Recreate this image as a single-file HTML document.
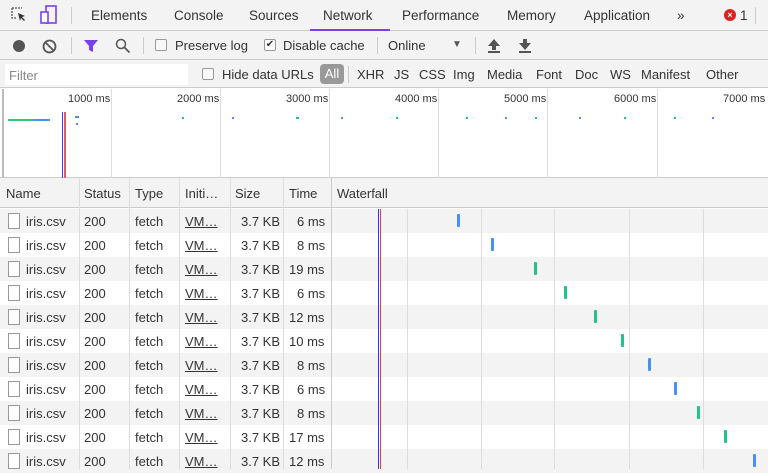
<!DOCTYPE html>
<html><head><style>
*{margin:0;padding:0;box-sizing:border-box}
body{width:768px;height:469px;overflow:hidden;background:#fff;font-family:"Liberation Sans",sans-serif;font-size:13px;color:#333;position:relative}
.abs{position:absolute}
.bar{height:31px;background:#f3f3f3;border-bottom:1px solid #ccc;top:0;left:0;width:768px}
.tab{position:absolute;top:8px;font-size:13.5px;color:#333}
.tb{top:31px;height:29px;width:768px;background:#f3f3f3;border-bottom:1px solid #ccc;left:0}
.fb{top:60px;height:28px;width:768px;background:#f3f3f3;border-bottom:1px solid #ccc;left:0}
.t{position:absolute;white-space:nowrap}
.sep{position:absolute;width:1px;background:#ccc}
.cb{position:absolute;width:12px;height:12px;border:1px solid #999;border-radius:2px;background:#fff}
.row{position:absolute;left:0;width:768px;height:24px}
.row span{position:absolute;top:5px;white-space:nowrap}
.vl{position:absolute;width:1px;background:#ddd}
.wb{position:absolute;width:3px;height:13px;border-radius:1px}
</style></head><body>
<div class="abs bar"></div>
<svg class="abs" style="left:11px;top:7px" width="16" height="16"><path d="M1 1h10M1 1v10h4" stroke="#555" fill="none" stroke-width="1.3" stroke-dasharray="2 1"/><path d="M7 6l7 3-3 1 3 3-1 1-3-3-1 3z" fill="#333"/></svg>
<svg class="abs" style="left:40px;top:5px" width="18" height="20"><rect x="6" y="1" width="10" height="17" fill="none" stroke="#7b3ff0" stroke-width="1.6"/><rect x="1" y="7" width="7" height="11" fill="#fff" stroke="#7b3ff0" stroke-width="1.6"/></svg>
<div class="sep" style="left:71px;top:7px;height:17px"></div>
<div class="tab" style="left:91px">Elements</div>
<div class="tab" style="left:174px">Console</div>
<div class="tab" style="left:249px">Sources</div>
<div class="tab" style="left:323px">Network</div>
<div class="abs" style="left:310px;top:29px;width:80px;height:2px;background:#7b3ff0"></div>
<div class="tab" style="left:402px">Performance</div>
<div class="tab" style="left:507px">Memory</div>
<div class="tab" style="left:584px">Application</div>
<div class="tab" style="left:677px">»</div>
<div class="abs" style="left:724px;top:9px;width:12px;height:12px;border-radius:6px;background:#e0201c;color:#fff;font-size:9px;text-align:center;line-height:12px;font-weight:bold">×</div>
<div class="tab" style="left:740px">1</div>
<div class="sep" style="left:755px;top:7px;height:17px"></div>

<div class="abs tb"></div>
<div class="abs" style="left:13px;top:40px;width:12px;height:12px;border-radius:6px;background:#555"></div>
<svg class="abs" style="left:42px;top:39px" width="15" height="15"><circle cx="7.5" cy="7.5" r="6" fill="none" stroke="#555" stroke-width="1.8"/><path d="M3.5 3.5l8 8" stroke="#555" stroke-width="1.8"/></svg>
<div class="sep" style="left:71px;top:37px;height:17px"></div>
<svg class="abs" style="left:83px;top:39px" width="16" height="14"><path d="M1 1h14l-5 6v6l-4-2v-4z" fill="#7b3ff0"/></svg>
<svg class="abs" style="left:115px;top:38px" width="16" height="16"><circle cx="6" cy="6" r="4.5" fill="none" stroke="#555" stroke-width="1.5"/><path d="M9.5 9.5l5 5" stroke="#555" stroke-width="1.8"/></svg>
<div class="sep" style="left:143px;top:37px;height:17px"></div>
<div class="cb" style="left:155px;top:39px;background:#f8f8f8"></div>
<div class="t" style="left:175px;top:38px">Preserve log</div>
<div class="cb" style="left:264px;top:39px;font-size:10px;line-height:10px;text-align:center">✔</div>
<div class="t" style="left:283px;top:38px">Disable cache</div>
<div class="sep" style="left:377px;top:37px;height:17px"></div>
<div class="t" style="left:388px;top:38px">Online</div>
<div class="t" style="left:452px;top:39px;font-size:10px;color:#555">▼</div>
<div class="sep" style="left:475px;top:37px;height:17px"></div>
<svg class="abs" style="left:487px;top:38px" width="14" height="15"><path d="M7 1l6 7H9v4H5V8H1z" fill="#555"/><rect x="1" y="13" width="12" height="2" fill="#555"/></svg>
<svg class="abs" style="left:518px;top:38px" width="14" height="15"><path d="M7 12l6-7H9V1H5v4H1z" fill="#555"/><rect x="1" y="13" width="12" height="2" fill="#555"/></svg>

<div class="abs fb"></div>
<div class="abs" style="left:5px;top:64px;width:183px;height:21px;background:#fff"></div>
<div class="t" style="left:9px;top:68px;color:#888">Filter</div>
<div class="cb" style="left:202px;top:68px;background:#f8f8f8"></div>
<div class="t" style="left:222px;top:67px">Hide data URLs</div>
<div class="abs" style="left:320px;top:64px;width:24px;height:20px;border-radius:4px;background:#999;color:#fff;text-align:center;line-height:20px">All</div>
<div class="sep" style="left:348px;top:66px;height:17px"></div>
<div class="t" style="left:357px;top:67px">XHR</div>
<div class="t" style="left:394px;top:67px">JS</div>
<div class="t" style="left:419px;top:67px">CSS</div>
<div class="t" style="left:453px;top:67px">Img</div>
<div class="t" style="left:487px;top:67px">Media</div>
<div class="t" style="left:536px;top:67px">Font</div>
<div class="t" style="left:575px;top:67px">Doc</div>
<div class="t" style="left:610px;top:67px">WS</div>
<div class="t" style="left:641px;top:67px">Manifest</div>
<div class="t" style="left:706px;top:67px">Other</div>

<!-- overview -->
<div class="abs" style="left:0;top:88px;width:768px;height:90px;background:#fff;border-bottom:1px solid #ccc"></div>
<div class="abs" style="left:2px;top:89px;width:2px;height:89px;background:#bbb"></div>
<div class="vl" style="left:111px;top:89px;height:89px"></div>
<div class="vl" style="left:220px;top:89px;height:89px"></div>
<div class="vl" style="left:329px;top:89px;height:89px"></div>
<div class="vl" style="left:438px;top:89px;height:89px"></div>
<div class="vl" style="left:547px;top:89px;height:89px"></div>
<div class="vl" style="left:657px;top:89px;height:89px"></div>
<div class="t" style="left:68px;top:93px;font-size:11px">1000 ms</div>
<div class="t" style="left:177px;top:93px;font-size:11px">2000 ms</div>
<div class="t" style="left:286px;top:93px;font-size:11px">3000 ms</div>
<div class="t" style="left:395px;top:93px;font-size:11px">4000 ms</div>
<div class="t" style="left:504px;top:93px;font-size:11px">5000 ms</div>
<div class="t" style="left:614px;top:93px;font-size:11px">6000 ms</div>
<div class="t" style="left:723px;top:93px;font-size:11px">7000 ms</div>
<div class="abs" style="left:8px;top:119px;width:25px;height:2px;background:#2ecc71"></div>
<div class="abs" style="left:33px;top:119px;width:17px;height:2px;background:#4a8ff5"></div>
<div class="abs" style="left:62px;top:112px;width:1px;height:66px;background:#4040ff"></div>
<div class="abs" style="left:64px;top:112px;width:2px;height:66px;background:#e06060"></div>
<div class="abs" style="left:75px;top:116px;width:4px;height:2px;background:#4a8ff5"></div>
<div class="abs" style="left:76px;top:123px;width:2px;height:2px;background:#4a8ff5"></div>
<div class="abs" style="left:182px;top:117px;width:2px;height:2px;background:#1ec48a"></div>
<div class="abs" style="left:232px;top:117px;width:2px;height:2px;background:#4a8ff5"></div>
<div class="abs" style="left:296px;top:117px;width:3px;height:2px;background:#1ec48a"></div>
<div class="abs" style="left:341px;top:117px;width:2px;height:2px;background:#4a8ff5"></div>
<div class="abs" style="left:396px;top:117px;width:2px;height:2px;background:#1ec48a"></div>
<div class="abs" style="left:466px;top:117px;width:2px;height:2px;background:#1ec48a"></div>
<div class="abs" style="left:505px;top:117px;width:2px;height:2px;background:#4a8ff5"></div>
<div class="abs" style="left:535px;top:117px;width:2px;height:2px;background:#1ec48a"></div>
<div class="abs" style="left:579px;top:117px;width:2px;height:2px;background:#4a8ff5"></div>
<div class="abs" style="left:624px;top:117px;width:2px;height:2px;background:#1ec48a"></div>
<div class="abs" style="left:674px;top:117px;width:2px;height:2px;background:#1ec48a"></div>
<div class="abs" style="left:712px;top:117px;width:2px;height:2px;background:#4a8ff5"></div>

<!-- header -->
<div class="abs" style="left:0;top:178px;width:768px;height:30px;background:#f3f3f3;border-bottom:1px solid #ccc"></div>
<div class="t" style="left:6px;top:186px">Name</div>
<div class="t" style="left:84px;top:186px">Status</div>
<div class="t" style="left:135px;top:186px">Type</div>
<div class="t" style="left:185px;top:186px">Initi…</div>
<div class="t" style="left:235px;top:186px">Size</div>
<div class="t" style="left:289px;top:186px">Time</div>
<div class="t" style="left:337px;top:186px">Waterfall</div>

<div id="rows"></div>
<script>
var xs=[458,492,535,565,595,622,649,675,698,725,754];
var cs=['#4a8ff5','#4a8ff5','#1ec48a','#1ec48a','#1ec48a','#1ec48a','#4a8ff5','#4a8ff5','#1ec48a','#1ec48a','#4a8ff5'];
var tm=['6','8','19','6','12','10','8','6','8','17','12'];
var h='';
for(var i=0;i<11;i++){var y=209+i*24;
h+='<div class="row" style="top:'+y+'px;background:'+(i%2?'#fff':'#f3f3f3')+'">'+
'<div class="abs" style="left:8px;top:4px;width:12px;height:16px;border:1px solid #999;background:#fff"></div>'+
'<span style="left:26px">iris.csv</span><span style="left:84px">200</span><span style="left:135px">fetch</span>'+
'<span style="left:185px;text-decoration:underline">VM…</span><span style="left:241px">3.7 KB</span>'+
'<span style="left:'+(tm[i].length>1?289:297)+'px">'+tm[i]+' ms</span>'+
'<div class="wb" style="left:'+(xs[i]-1)+'px;top:5px;background:'+cs[i]+'"></div></div>';}
document.getElementById('rows').innerHTML=h;
</script>
<div class="sep" style="left:79px;top:178px;height:291px;background:#ddd"></div>
<div class="sep" style="left:129px;top:178px;height:291px;background:#ddd"></div>
<div class="sep" style="left:179px;top:178px;height:291px;background:#ddd"></div>
<div class="sep" style="left:230px;top:178px;height:291px;background:#ddd"></div>
<div class="sep" style="left:283px;top:178px;height:291px;background:#ddd"></div>
<div class="sep" style="left:331px;top:178px;height:291px;background:#ccc"></div>
<div class="vl" style="left:407px;top:209px;height:260px"></div>
<div class="vl" style="left:481px;top:209px;height:260px"></div>
<div class="vl" style="left:554px;top:209px;height:260px"></div>
<div class="vl" style="left:629px;top:209px;height:260px"></div>
<div class="vl" style="left:703px;top:209px;height:260px"></div>
<div class="abs" style="left:378px;top:209px;width:1px;height:260px;background:#3030ff"></div>
<div class="abs" style="left:380px;top:209px;width:1px;height:260px;background:#e04040"></div>
</body></html>
